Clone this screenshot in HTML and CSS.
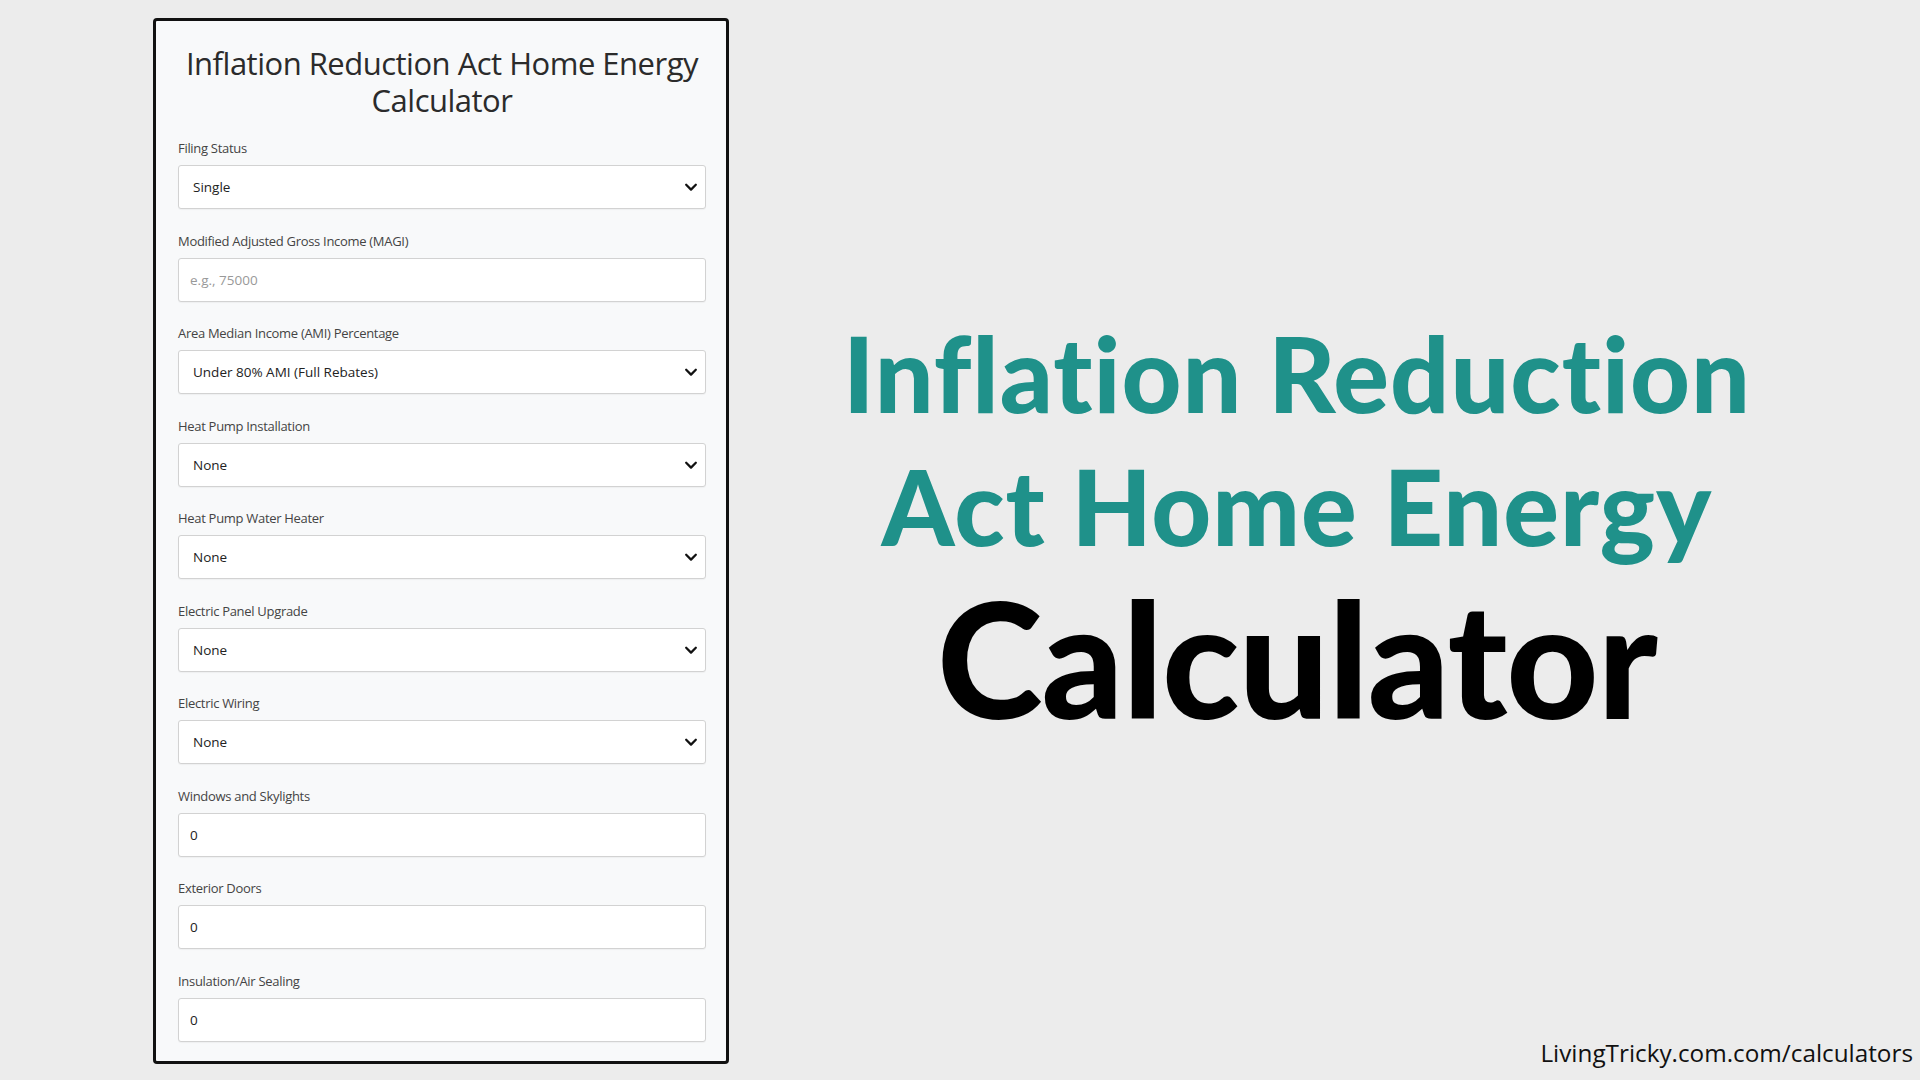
FILE: index.html
```html
<!DOCTYPE html>
<html lang="en">
<head>
    <meta charset="UTF-8">
    <meta name="viewport" content="width=device-width, initial-scale=1.0">
    <title>Inflation Reduction Act Home Energy Calculator</title>
    <link rel="stylesheet" href="styles.css">
</head>
<body>
    <div class="page">
        <div class="calculator">
            <h1>Inflation Reduction Act Home Energy Calculator</h1>
            <form id="ira-form">
                <div class="field">
                    <label for="filing">Filing Status</label>
                    <div class="select-wrap">
                        <select id="filing">
                            <option>Single</option>
                            <option>Married Filing Jointly</option>
                            <option>Head of Household</option>
                        </select>
                        <svg class="chevron" viewBox="0 0 16 16"><path d="M2.5 5.5 8 11l5.5-5.5"/></svg>
                    </div>
                </div>
                <div class="field">
                    <label for="magi">Modified Adjusted Gross Income (MAGI)</label>
                    <input type="text" id="magi" placeholder="e.g., 75000">
                </div>
                <div class="field">
                    <label for="ami">Area Median Income (AMI) Percentage</label>
                    <div class="select-wrap">
                        <select id="ami">
                            <option>Under 80% AMI (Full Rebates)</option>
                            <option>80% - 150% AMI (Partial Rebates)</option>
                            <option>Over 150% AMI</option>
                        </select>
                        <svg class="chevron" viewBox="0 0 16 16"><path d="M2.5 5.5 8 11l5.5-5.5"/></svg>
                    </div>
                </div>
                <div class="field">
                    <label for="heatpump">Heat Pump Installation</label>
                    <div class="select-wrap">
                        <select id="heatpump"><option>None</option></select>
                        <svg class="chevron" viewBox="0 0 16 16"><path d="M2.5 5.5 8 11l5.5-5.5"/></svg>
                    </div>
                </div>
                <div class="field">
                    <label for="waterheater">Heat Pump Water Heater</label>
                    <div class="select-wrap">
                        <select id="waterheater"><option>None</option></select>
                        <svg class="chevron" viewBox="0 0 16 16"><path d="M2.5 5.5 8 11l5.5-5.5"/></svg>
                    </div>
                </div>
                <div class="field">
                    <label for="panel">Electric Panel Upgrade</label>
                    <div class="select-wrap">
                        <select id="panel"><option>None</option></select>
                        <svg class="chevron" viewBox="0 0 16 16"><path d="M2.5 5.5 8 11l5.5-5.5"/></svg>
                    </div>
                </div>
                <div class="field">
                    <label for="wiring">Electric Wiring</label>
                    <div class="select-wrap">
                        <select id="wiring"><option>None</option></select>
                        <svg class="chevron" viewBox="0 0 16 16"><path d="M2.5 5.5 8 11l5.5-5.5"/></svg>
                    </div>
                </div>
                <div class="field">
                    <label for="windows">Windows and Skylights</label>
                    <input type="number" id="windows" value="0">
                </div>
                <div class="field">
                    <label for="doors">Exterior Doors</label>
                    <input type="number" id="doors" value="0">
                </div>
                <div class="field">
                    <label for="insulation">Insulation/Air Sealing</label>
                    <input type="number" id="insulation" value="0">
                </div>
            </form>
        </div>
        <div class="hero">
            <h2 class="hero-teal">Inflation Reduction<br>Act Home Energy</h2>
            <h2 class="hero-dark">Calculator</h2>
        </div>
    </div>
    <div class="site-link">LivingTricky.com.com/calculators</div>
</body>
</html>
```

FILE: styles.css
```css
body {
    margin: 0;
    padding: 0;
    background-color: #ececec;
    font-family: 'Open Sans', 'Noto Sans', sans-serif;
    color: #333;
    height: 1080px;
    overflow: hidden;
}
.page {
    display: flex;
    align-items: flex-start;
    padding: 18px 0 0 153px;
}
.calculator {
    width: 528px;
    background-color: #f8f9fa;
    border: 3px solid #111;
    border-radius: 4px;
    padding: 24px 20px 19px 22px;
}
.calculator h1 {
    margin: 0 0 20px;
    font-size: 31px;
    font-weight: 500;
    line-height: 37px;
    text-align: center;
    color: #2b2b2b;
    letter-spacing: -0.5px;
}
.field {
    margin-bottom: 22.5px;
}
.field:last-child {
    margin-bottom: 0;
}
.field label {
    display: block;
    font-size: 13px;
    line-height: 18px;
    color: #444;
    letter-spacing: -0.3px;
    margin-bottom: 8px;
}
.field input,
.field select {
    display: block;
    width: 100%;
    height: 44px;
    box-sizing: border-box;
    border: 1px solid #d2d2d2;
    border-radius: 3px;
    background: #fff;
    padding: 0 14px;
    font-family: 'Open Sans', 'Noto Sans', sans-serif;
    font-size: 13.5px;
    color: #222;
    box-shadow: 0 1px 1px rgba(0, 0, 0, 0.04);
    -webkit-appearance: none;
    appearance: none;
    -moz-appearance: textfield;
    outline: none;
}
.field input {
    padding-left: 11px;
}
.field input::placeholder {
    color: #999;
}
.field input::-webkit-inner-spin-button,
.field input::-webkit-outer-spin-button {
    -webkit-appearance: none;
    margin: 0;
}
.select-wrap {
    position: relative;
}
.chevron {
    position: absolute;
    right: 8px;
    top: 15px;
    width: 14px;
    height: 14px;
    fill: none;
    stroke: #111;
    stroke-width: 2.6;
    stroke-linecap: round;
    stroke-linejoin: round;
    pointer-events: none;
}
.hero {
    flex: 1;
    text-align: center;
    padding: 288px 55px 0 0;
}
.hero h2 {
    margin: 0;
    font-family: 'Lato', sans-serif;
    font-weight: 900;
}
.hero .hero-teal {
    color: #1f918a;
    font-size: 104px;
    line-height: 133px;
    letter-spacing: 1px;
}
.hero .hero-dark {
    color: #000;
    font-size: 160px;
    line-height: 150px;
    letter-spacing: -1px;
    margin-top: 10px;
}
.site-link {
    position: absolute;
    right: 7px;
    bottom: 11px;
    font-size: 24.3px;
    color: #111;
}
```
